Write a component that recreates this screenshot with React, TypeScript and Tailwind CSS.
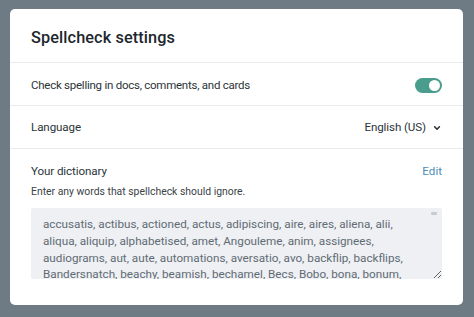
import { useState } from "react";

const WORDS =
  "accusatis, actibus, actioned, actus, adipiscing, aire, aires, aliena, alii, aliqua, aliquip, alphabetised, amet, Angouleme, anim, assignees, audiograms, aut, aute, automations, aversatio, avo, backflip, backflips, Bandersnatch, beachy, beamish, bechamel, Becs, Bobo, bona, bonum, borogoves, brillig, Bubba, Calloway, cheesecake, Chiclets";

export default function App() {
  const [enabled, setEnabled] = useState(true);

  return (
    <div
      className="w-[474px] h-[317px] bg-[#6e7a84] pt-[9px] pl-[10px] pr-[11px] overflow-hidden"
      style={{ fontFamily: "Roboto, 'Noto Sans', sans-serif" }}
    >
      <div className="h-[296px] bg-white rounded-[5px] flex flex-col">
        {/* Header */}
        <div className="h-[54px] flex items-center px-[21px] pt-[6px] border-b border-[#e9ebee]">
          <h2 className="text-[16.3px] font-medium text-[#1e272d] tracking-[0.1px]">Spellcheck settings</h2>
        </div>

        {/* Toggle row */}
        <div className="h-[43px] flex items-center justify-between px-[21px] pt-[3px] border-b border-[#e9ebee]">
          <span className="text-[11.5px] tracking-[-0.25px] text-[#2b3439]">Check spelling in docs, comments, and cards</span>
          <button
            onClick={() => setEnabled(!enabled)}
            className={`w-[27px] h-[15px] rounded-full flex items-center px-[2px] ${
              enabled ? "bg-[#4a9d8c] justify-end" : "bg-[#c9ced3] justify-start"
            }`}
          >
            <span className="w-[11px] h-[11px] rounded-full bg-white" />
          </button>
        </div>

        {/* Language row */}
        <div className="h-[43px] flex items-center justify-between px-[21px] pt-[2px] border-b border-[#e9ebee]">
          <span className="text-[11.6px] tracking-[-0.1px] text-[#2b3439]">Language</span>
          <div className="flex items-center gap-[7px] text-[11.6px] tracking-[-0.1px] text-[#2b3439]">
            <span>English (US)</span>
            <svg className="w-[8px] h-[8px] mt-[1px] mr-[1px]" viewBox="0 0 10 10" fill="none" stroke="#2b3439" strokeWidth={2}>
              <path d="M2 3.5l3 3 3-3" strokeLinecap="round" strokeLinejoin="round" />
            </svg>
          </div>
        </div>

        {/* Dictionary */}
        <div className="px-[21px] pt-[14px]">
          <div className="flex items-center justify-between">
            <span className="text-[11.6px] tracking-[-0.1px] text-[#2b3439]">Your dictionary</span>
            <button className="text-[11.6px] text-[#4d8db6]">Edit</button>
          </div>
          <p className="mt-[4px] text-[10.4px] text-[#3a4348]">Enter any words that spellcheck should ignore.</p>
          <div className="relative mt-[8px]">
            <textarea
              readOnly
              value={WORDS}
              className="block w-full h-[71px] resize-y bg-[#eef0f3] rounded-[2px] pl-[12px] pr-[27px] pt-[8px] text-[11.7px] leading-[16.8px] text-[#616b74] outline-none overflow-hidden"
            />
            <span className="absolute right-[5px] top-[4px] w-[6px] h-[3px] bg-[#c8ccd1] rounded-[1px]" />
          </div>
        </div>
      </div>
    </div>
  );
}
